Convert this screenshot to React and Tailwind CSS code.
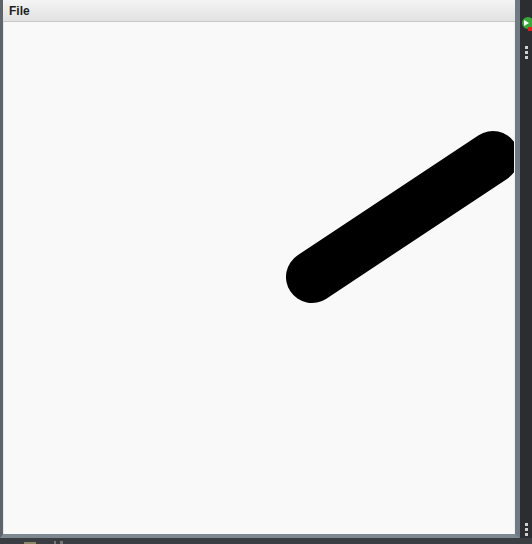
export default function App() {
    return (
        <div className="w-[532px] h-[544px] flex flex-col bg-[#2e3134] overflow-hidden" style={{ fontFamily: '"Liberation Sans", Arial, sans-serif' }}>
            <div className="flex flex-1 min-h-0">
                {/* window */}
                <div className="w-[520px] flex flex-col border-l-[3px] border-l-[#5d646c] border-r-[5px] border-r-[#6f7a84] border-b-[4px] border-b-[#7d8891] bg-[#f9f9f9]">
                    <div className="h-[22px] shrink-0 flex items-center px-[6px] bg-gradient-to-b from-[#f4f4f4] to-[#e2e2e2] border-b border-[#c8c8c8]">
                        <span className="text-[12px] font-bold text-[#1e1e1e] leading-none">File</span>
                    </div>
                    <div className="flex-1 relative overflow-hidden border-l border-[#e6e8ea] border-r border-r-[#f0f0f0]">
                        <svg className="absolute left-0 top-0" width="512" height="512">
                            <line x1="308" y1="255" x2="489" y2="135" stroke="#000" strokeWidth="52" strokeLinecap="round" />
                        </svg>
                    </div>
                </div>
                {/* side strip */}
                <div className="w-[12px] flex flex-col items-center pt-[17px] bg-[#2b2d30]">
                    <div className="relative w-[12px] h-[14px]">
                        <div className="absolute left-[2px] top-0 w-[12px] h-[12px] rounded-full bg-[#3aa63a] flex items-center justify-center">
                            <div className="w-0 h-0 border-y-[3px] border-y-transparent border-l-[5px] border-l-white ml-[-3px]" />
                        </div>
                        <div className="absolute left-[8px] top-[10px] w-[4px] h-[4px] bg-[#e02020]" />
                    </div>
                    <div className="mt-[15px] flex flex-col gap-[2px]">
                        <div className="w-[3px] h-[3px] bg-[#d0d0d0]" />
                        <div className="w-[3px] h-[3px] bg-[#d0d0d0]" />
                        <div className="w-[3px] h-[3px] bg-[#d0d0d0]" />
                    </div>
                    <div className="mt-auto mb-[2px] flex flex-col gap-[2px]">
                        <div className="w-[3px] h-[3px] bg-[#d0d0d0]" />
                        <div className="w-[3px] h-[3px] bg-[#d0d0d0]" />
                        <div className="w-[3px] h-[3px] bg-[#d0d0d0]" />
                    </div>
                </div>
            </div>
            <div className="h-[6px] shrink-0 bg-[#3a3d41] flex items-end">
                <div className="ml-[24px] w-[12px] h-[2px] bg-[#8a8a6a]" />
                <div className="ml-[18px] w-[2px] h-[3px] bg-[#777]" />
                <div className="ml-[4px] w-[3px] h-[3px] bg-[#777]" />
            </div>
        </div>
    );
}
